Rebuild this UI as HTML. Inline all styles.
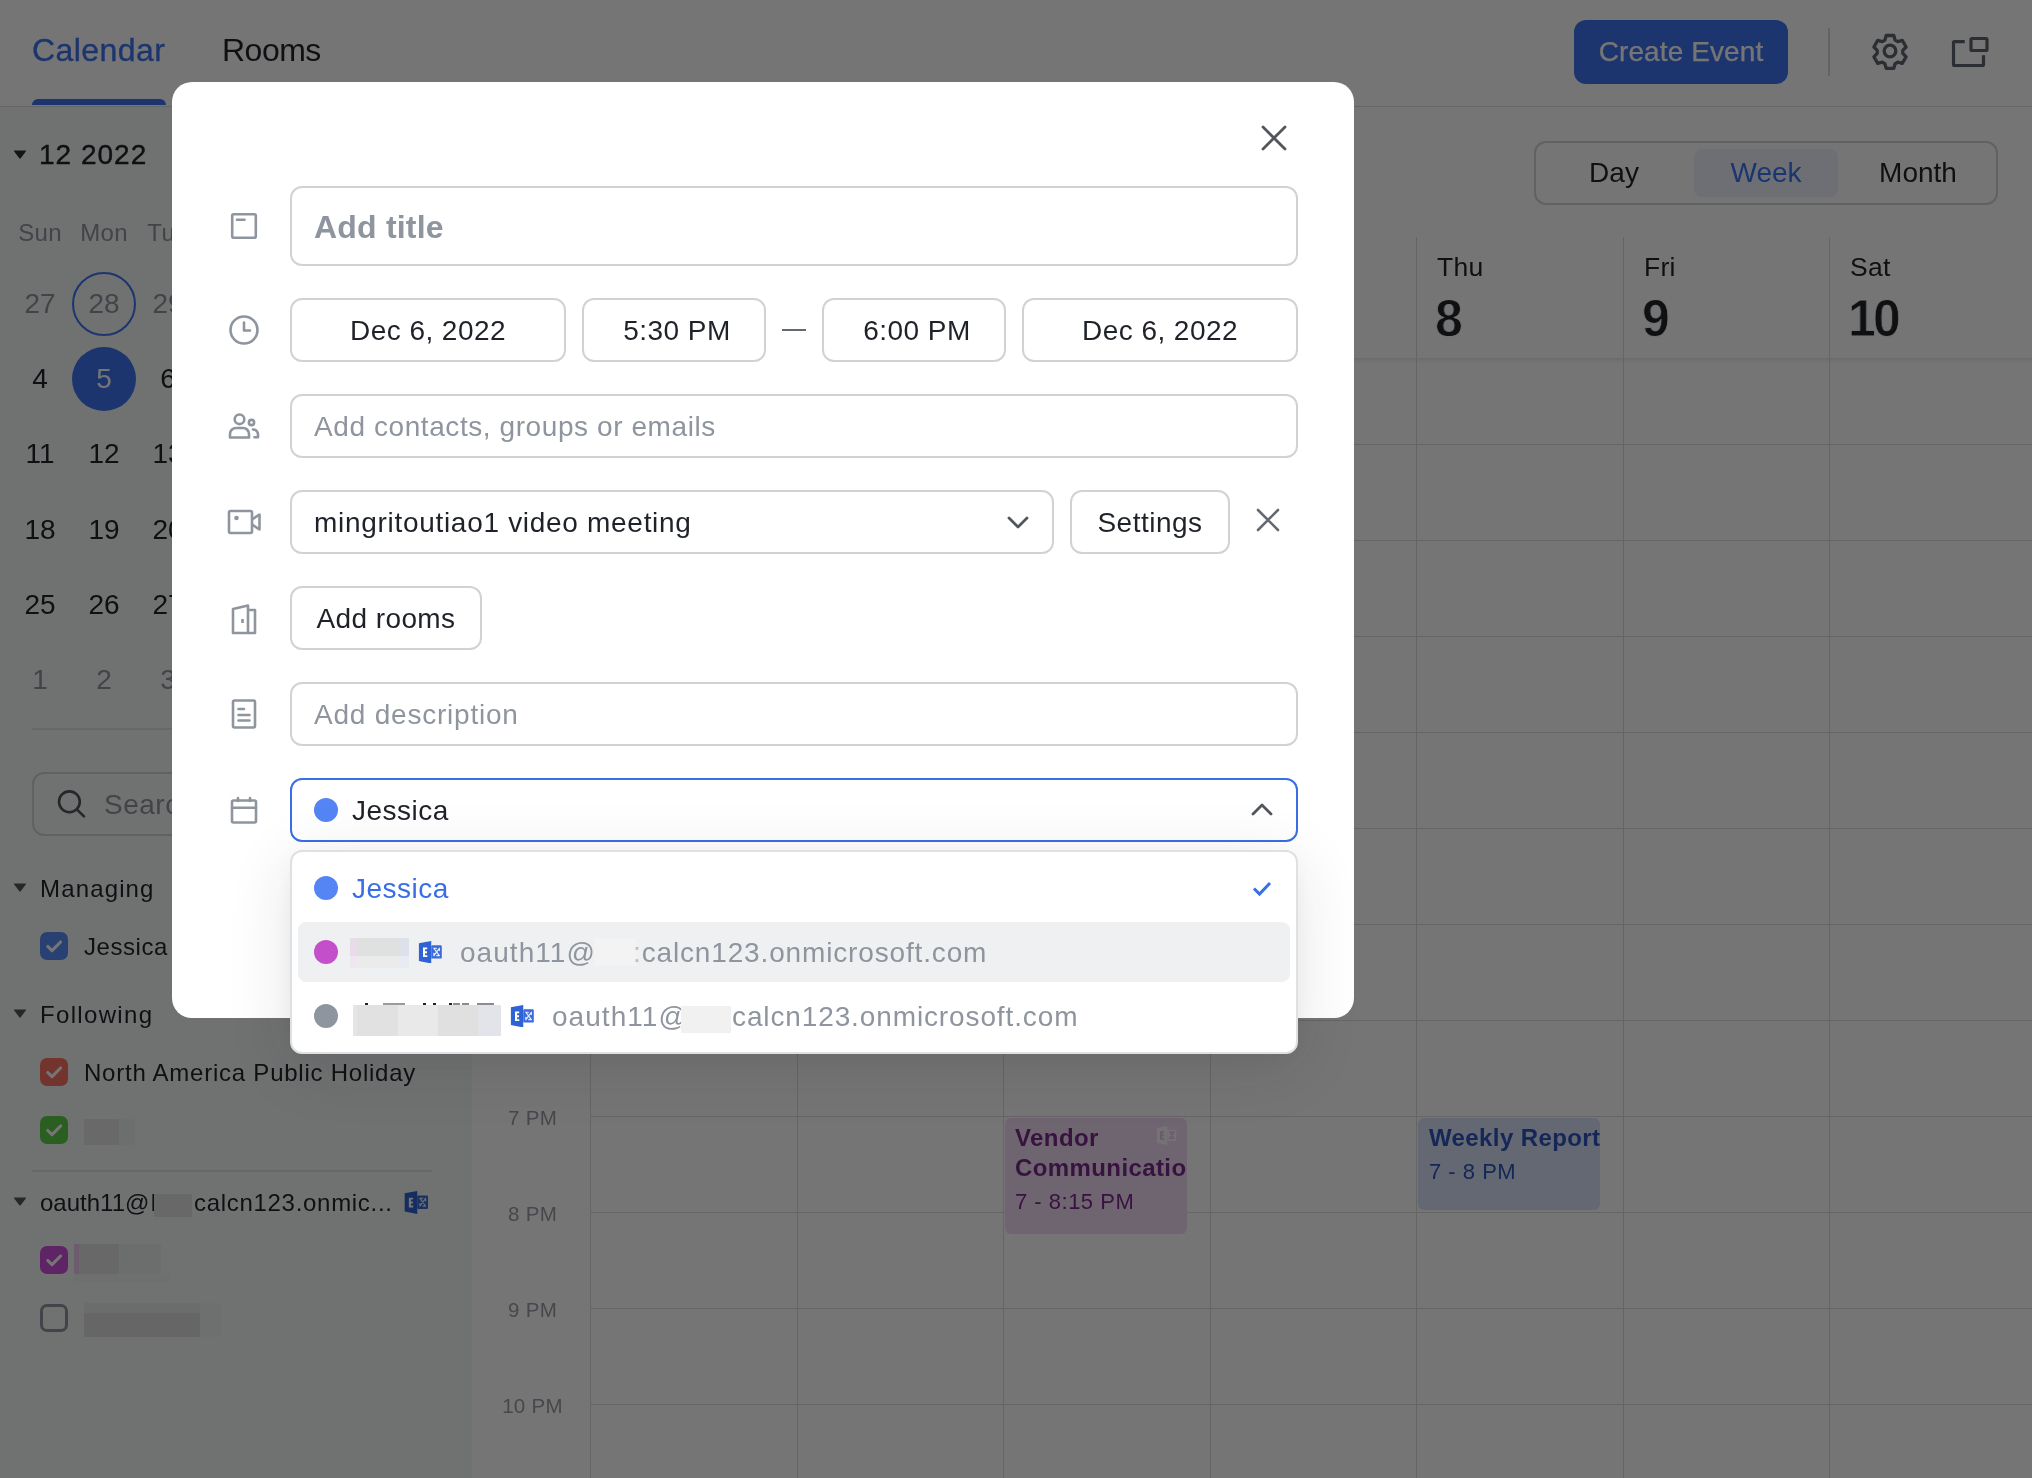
<!DOCTYPE html>
<html>
<head>
<meta charset="utf-8">
<title>Calendar</title>
<style>
*{box-sizing:border-box;margin:0;padding:0}
html,body{width:2032px;height:1478px;overflow:hidden;background:#fff}
body{font-family:"Liberation Sans",sans-serif;color:#1f2329}
#app{position:relative;width:2032px;height:1478px;overflow:hidden;background:#fff}
.t,.it,.mc,.wd,.sl,.sh,.tm,.dn,.dd{will-change:transform}
.abs{position:absolute}
.t{position:absolute;white-space:nowrap;line-height:1}
#topbar{position:absolute;left:0;top:0;width:2032px;height:107px;border-bottom:1px solid #dcdee0;background:#fff}
#tab-ul{position:absolute;left:32px;top:99px;width:134px;height:6px;background:#3f73ef;border-radius:6px 6px 0 0}
#create{position:absolute;left:1574px;top:20px;width:214px;height:64px;border-radius:12px;background:#3f73ef}
#sidebar{position:absolute;left:0;top:107px;width:472px;height:1371px;background:#f4f6f6}
.mc{position:absolute;width:64px;text-align:center;font-size:28px;line-height:34px;color:#1f2329;white-space:nowrap}
.mc.g{color:#8f959e}
.wd{position:absolute;width:64px;text-align:center;font-size:24px;line-height:28px;color:#8f959e;white-space:nowrap;letter-spacing:.3px}
.cb{position:absolute;left:40px;width:28px;height:28px;border-radius:7px}
.sl{position:absolute;left:84px;font-size:24px;line-height:30px;white-space:nowrap;color:#1f2329;letter-spacing:.3px}
.sh{position:absolute;left:40px;font-size:24px;line-height:30px;white-space:nowrap;color:#1f2329;letter-spacing:.6px}
.b{position:absolute}
#main{position:absolute;left:472px;top:107px;width:1560px;height:1371px;background:#fff}
.vl{position:absolute;top:237px;width:1px;height:1241px;background:#dcdddf}
.hl{position:absolute;left:590px;width:1442px;height:1px;background:#dcdddf}
.tm{position:absolute;left:473px;width:119px;text-align:center;font-size:20.5px;line-height:26px;color:#989ea7;white-space:nowrap;letter-spacing:.3px}
.dn{position:absolute;letter-spacing:.3px;font-size:26.5px;line-height:30px;color:#1f2329;white-space:nowrap}
.dd{position:absolute;font-size:52px;line-height:52px;font-weight:bold;color:#1f2329;white-space:nowrap;transform:scaleX(.96);transform-origin:0 50%;-webkit-text-stroke:.8px #fff;letter-spacing:-3px}
#mask{position:absolute;left:0;top:0;width:2032px;height:1478px;background:rgba(0,0,0,.54)}
#modal{position:absolute;left:172px;top:82px;width:1182px;height:936px;border-radius:20px;background:#fff}
.inp{position:absolute;border:2px solid #d0d3d6;border-radius:12px;background:#fff}
.it{position:absolute;white-space:nowrap;font-size:28px;line-height:34px;color:#1f2329}
.ph{color:#8f959e}
.ico{position:absolute}
#dropdown{position:absolute;left:290px;top:850px;width:1008px;height:204px;border-radius:12px;background:#fff;border:2px solid #dee0e3;box-shadow:0 12px 64px rgba(31,35,41,.12),0 6px 24px rgba(31,35,41,.04)}
</style>
</head>
<body>
<div id="app">
<svg width="0" height="0" style="position:absolute"><defs>
<symbol id="exch" viewBox="0 0 24 23">
<path d="M0.3 2.3 L13 0 V23 L0.3 20.5 Z" fill="#2f62d3"/>
<path d="M4.6 6.7 H8.9 V8.5 H6.7 V10.6 H8.7 V12.4 H6.7 V14.6 H9 V16.4 H4.6 Z" fill="#fff"/>
<rect x="13" y="4.4" width="10.8" height="13.6" rx="1.2" fill="#3a6bd8"/>
<path d="M15.7 7.4 L21.3 15 M21.3 7.4 L15.7 15 M15.7 7.4 h2.6 M21.3 15 h-2.6 M21.3 7.4 v2.4 M15.7 15 v-2.4" fill="none" stroke="#e6edff" stroke-width="1.25" stroke-linecap="round"/>
</symbol>
<symbol id="tri" viewBox="0 0 14 9"><path d="M1.6 0.6 H12.4 Q13.6 0.6 12.8 1.6 L7.7 8.2 Q7 9 6.3 8.2 L1.2 1.6 Q0.4 0.6 1.6 0.6 Z"/></symbol>
</defs></svg>
<div id="topbar">
<div class="t" style="left:32px;top:31.5px;font-size:32px;line-height:36px;color:#3f73ef;letter-spacing:.45px;-webkit-text-stroke:.35px #3f73ef">Calendar</div>
<div class="t" style="left:222px;top:31.5px;font-size:32px;line-height:36px;color:#1f2329;letter-spacing:-.5px">Rooms</div>
<div id="tab-ul"></div>
<div id="create"><div class="t" style="left:0;width:214px;text-align:center;top:15px;font-size:28px;line-height:34px;color:#fff;letter-spacing:.1px;-webkit-text-stroke:.25px #fff">Create Event</div></div>
<div class="abs" style="left:1828px;top:28px;width:2px;height:48px;background:#d5d7da"></div>
<svg class="abs" style="left:1870px;top:31px" width="40" height="40" viewBox="0 0 40 40"><g fill="none" stroke="#5f656e" stroke-width="3.3" stroke-linejoin="round">
<path d="M16.2 4.5 h7.6 l1.3 4.6 l2.6 1.5 l4.6 -1.2 l3.8 6.6 l-3.3 3.4 v3 l3.3 3.4 l-3.8 6.6 l-4.6 -1.2 l-2.6 1.5 l-1.3 4.6 h-7.6 l-1.3 -4.6 l-2.6 -1.5 l-4.6 1.2 l-3.8 -6.6 l3.3 -3.4 v-3 l-3.3 -3.4 l3.8 -6.6 l4.6 1.2 l2.6 -1.5 z"/>
<circle cx="20" cy="20" r="5.8"/></g></svg>
<svg class="abs" style="left:1950px;top:35px" width="40" height="34" viewBox="0 0 40 34"><g fill="none" stroke="#5f656e" stroke-width="3.2" stroke-linejoin="round" stroke-linecap="butt">
<path d="M14.8 6.6 H4.5 a1 1 0 0 0 -1 1 V29.5 a1 1 0 0 0 1 1 H32.5 a1 1 0 0 0 1 -1 V20.3"/>
<rect x="21" y="3.5" width="16" height="12" rx="1"/></g></svg>
</div>
<div id="sidebar"></div>
<svg class="abs" style="left:13px;top:150px" width="14" height="9" viewBox="0 0 14 9" fill="#2b2f36"><use href="#tri"/></svg>
<div class="t" style="left:39px;top:137.5px;font-size:28px;line-height:34px;color:#1f2329;letter-spacing:1px;-webkit-text-stroke:.4px #1f2329">12 2022</div>
<div class="wd" style="left:8px;top:219px">Sun</div>
<div class="wd" style="left:72px;top:219px">Mon</div>
<div class="wd" style="left:136px;top:219px">Tue</div>
<div class="abs" style="left:72px;top:272px;width:64px;height:64px;border-radius:50%;border:2px solid #3f73ef"></div>
<div class="abs" style="left:72px;top:347px;width:64px;height:64px;border-radius:50%;background:#3f73ef"></div>
<div class="mc g" style="left:8px;top:287px">27</div>
<div class="mc g" style="left:72px;top:287px">28</div>
<div class="mc g" style="left:136px;top:287px">29</div>
<div class="mc" style="left:8px;top:362px">4</div>
<div class="mc" style="left:72px;top:362px;color:#fff">5</div>
<div class="mc" style="left:136px;top:362px">6</div>
<div class="mc" style="left:8px;top:437px">11</div>
<div class="mc" style="left:72px;top:437px">12</div>
<div class="mc" style="left:136px;top:437px">13</div>
<div class="mc" style="left:8px;top:513px">18</div>
<div class="mc" style="left:72px;top:513px">19</div>
<div class="mc" style="left:136px;top:513px">20</div>
<div class="mc" style="left:8px;top:588px">25</div>
<div class="mc" style="left:72px;top:588px">26</div>
<div class="mc" style="left:136px;top:588px">27</div>
<div class="mc g" style="left:8px;top:663px">1</div>
<div class="mc g" style="left:72px;top:663px">2</div>
<div class="mc g" style="left:136px;top:663px">3</div>
<div class="abs" style="left:32px;top:728px;width:400px;height:2px;background:#e0e2e5"></div>
<div class="abs" style="left:32px;top:772px;width:400px;height:64px;border:2px solid #d0d3d6;border-radius:12px;background:#f4f6f6"></div>
<svg class="abs" style="left:54px;top:786px" width="36" height="36" viewBox="0 0 36 36"><circle cx="15.4" cy="15.8" r="10.4" fill="none" stroke="#51565d" stroke-width="2.6"/><path d="M23 23.6 L30 30.4" stroke="#51565d" stroke-width="2.6" stroke-linecap="round"/></svg>
<div class="t" style="left:104px;top:787.5px;font-size:28px;line-height:34px;color:#8f959e;letter-spacing:.5px">Search</div>
<svg class="abs" style="left:13px;top:883px" width="14" height="9" viewBox="0 0 14 9" fill="#51565d"><use href="#tri"/></svg>
<div class="sh" style="top:873.6px;letter-spacing:1.15px">Managing</div>
<div class="cb" style="top:932px;background:#5b8ef8"><svg width="28" height="28" viewBox="0 0 28 28" style="display:block"><path d="M7.8 14.5 L12 18.7 L20.6 10" fill="none" stroke="#fff" stroke-width="3.1" stroke-linecap="round" stroke-linejoin="round"/></svg></div>
<div class="sl" style="top:931.8px;letter-spacing:.55px">Jessica</div>
<svg class="abs" style="left:13px;top:1009px" width="14" height="9" viewBox="0 0 14 9" fill="#51565d"><use href="#tri"/></svg>
<div class="sh" style="top:999.6px;letter-spacing:1.33px">Following</div>
<div class="cb" style="top:1058px;background:#fb7165"><svg width="28" height="28" viewBox="0 0 28 28" style="display:block"><path d="M7.8 14.5 L12 18.7 L20.6 10" fill="none" stroke="#fff" stroke-width="3.1" stroke-linecap="round" stroke-linejoin="round"/></svg></div>
<div class="sl" style="top:1057.6px;letter-spacing:.76px">North America Public Holiday</div>
<div class="cb" style="top:1116px;background:#5fcf4a"><svg width="28" height="28" viewBox="0 0 28 28" style="display:block"><path d="M7.8 14.5 L12 18.7 L20.6 10" fill="none" stroke="#fff" stroke-width="3.1" stroke-linecap="round" stroke-linejoin="round"/></svg></div>
<div class="b" style="left:84px;top:1119px;width:35px;height:26px;background:#e4e5e5"></div><div class="b" style="left:119px;top:1119px;width:16px;height:26px;background:#eeefef"></div>
<div class="abs" style="left:32px;top:1170px;width:400px;height:2px;background:#dfe1e6"></div>
<svg class="abs" style="left:13px;top:1197px" width="14" height="9" viewBox="0 0 14 9" fill="#51565d"><use href="#tri"/></svg>
<div class="sh" style="top:1187.6px;letter-spacing:0px">oauth11@<span style="margin-left:1.5px">l</span></div>
<div class="b" style="left:154px;top:1194px;width:38px;height:23px;background:#e2e3e3"></div>
<div class="sh" style="left:193.5px;top:1187.6px;letter-spacing:.7px">calcn123.onmic...</div>
<svg class="abs" style="left:404px;top:1190.5px" width="24.5" height="23" viewBox="0 0 24 23"><use href="#exch"/></svg>
<div class="cb" style="top:1246px;background:#cc50dc"><svg width="28" height="28" viewBox="0 0 28 28" style="display:block"><path d="M7.8 14.5 L12 18.7 L20.6 10" fill="none" stroke="#fff" stroke-width="3.1" stroke-linecap="round" stroke-linejoin="round"/></svg></div>
<div class="b" style="left:74px;top:1244px;width:5px;height:30px;background:#ecc9ef"></div><div class="b" style="left:79px;top:1244px;width:40px;height:30px;background:#e2e3e3"></div><div class="b" style="left:119px;top:1244px;width:42px;height:30px;background:#ecedee"></div><div class="b" style="left:74px;top:1274px;width:96px;height:8px;background:#f0f1f1"></div>
<div class="cb" style="top:1304px;border:3px solid #8f959e;background:transparent"></div>
<div class="b" style="left:84px;top:1303px;width:116px;height:10px;background:#eaebeb"></div><div class="b" style="left:84px;top:1313px;width:116px;height:24px;background:#dedfdf"></div><div class="b" style="left:200px;top:1303px;width:21px;height:34px;background:#f0f1f1"></div>
<div id="main"></div>
<div class="abs" style="left:1534px;top:141px;width:464px;height:64px;border:2px solid #d0d3d6;border-radius:12px"></div>
<div class="abs" style="left:1694px;top:149px;width:144px;height:48px;border-radius:8px;background:#eff2fd"></div>
<div class="t" style="left:1544px;width:140px;text-align:center;top:156px;font-size:28px;line-height:34px;color:#1f2329">Day</div>
<div class="t" style="left:1694px;width:144px;text-align:center;top:156px;font-size:28px;line-height:34px;color:#3f73ef">Week</div>
<div class="t" style="left:1848px;width:140px;text-align:center;top:156px;font-size:28px;line-height:34px;color:#1f2329">Month</div>
<div class="abs" style="left:472px;top:358px;width:1560px;height:6px;background:linear-gradient(180deg,rgba(31,35,41,.10),rgba(31,35,41,.04) 50%,rgba(31,35,41,0))"></div>
<div class="vl" style="left:590px"></div>
<div class="vl" style="left:797px"></div>
<div class="vl" style="left:1003px"></div>
<div class="vl" style="left:1210px"></div>
<div class="vl" style="left:1416px"></div>
<div class="vl" style="left:1623px"></div>
<div class="vl" style="left:1829px"></div>
<div class="hl" style="top:444px"></div>
<div class="hl" style="top:540px"></div>
<div class="hl" style="top:636px"></div>
<div class="hl" style="top:732px"></div>
<div class="hl" style="top:828px"></div>
<div class="hl" style="top:924px"></div>
<div class="hl" style="top:1020px"></div>
<div class="hl" style="top:1116px"></div>
<div class="hl" style="top:1212px"></div>
<div class="hl" style="top:1308px"></div>
<div class="hl" style="top:1404px"></div>
<div class="tm" style="top:1105px">7 PM</div>
<div class="tm" style="top:1201px">8 PM</div>
<div class="tm" style="top:1297px">9 PM</div>
<div class="tm" style="top:1393px">10 PM</div>
<div class="dn" style="left:611px;top:252px">Sun</div>
<div class="dd" style="left:609px;top:292px">4</div>
<div class="dn" style="left:818px;top:252px">Mon</div>
<div class="dd" style="left:816px;top:292px">5</div>
<div class="dn" style="left:1024px;top:252px">Tue</div>
<div class="dd" style="left:1022px;top:292px">6</div>
<div class="dn" style="left:1231px;top:252px">Wed</div>
<div class="dd" style="left:1229px;top:292px">7</div>
<div class="dn" style="left:1437px;top:252px">Thu</div>
<div class="dd" style="left:1435px;top:292px">8</div>
<div class="dn" style="left:1644px;top:252px">Fri</div>
<div class="dd" style="left:1642px;top:292px">9</div>
<div class="dn" style="left:1850px;top:252px">Sat</div>
<div class="dd" style="left:1848px;top:292px">10</div>
<div class="abs" style="left:1005px;top:1118px;width:182px;height:116px;border-radius:6px;background:#f2dcf4;overflow:hidden"><div class="t" style="left:10px;top:5px;font-size:24px;line-height:30px;font-weight:bold;color:#7c2a8c;letter-spacing:.4px">Vendor<br>Communicatio</div><div class="t" style="left:10px;top:70px;font-size:22px;line-height:28px;color:#7c2a8c;letter-spacing:.5px">7 - 8:15 PM</div><svg class="abs" style="left:151px;top:8px;opacity:.8" width="21" height="19" viewBox="0 0 24 23"><path d="M0.3 2.3 L13 0 V23 L0.3 20.5 Z" fill="#fff"/><rect x="13" y="4.6" width="10.8" height="13.2" rx="1" fill="#fff"/><path d="M4.2 6.4 H9.2 V8.6 H6.6 V10.4 H9 V12.5 H6.6 V14.4 H9.3 V16.6 H4.2 Z" fill="#e3bfe8"/><path d="M15.6 7.4 H21.4 L15.6 15 H21.4 M15.6 7.4 L21.4 15" fill="none" stroke="#e3bfe8" stroke-width="1.3"/></svg></div>
<div class="abs" style="left:1418px;top:1118px;width:182px;height:92px;border-radius:6px;background:#d9e3fb;overflow:hidden"><div class="t" style="left:11px;top:5px;font-size:24px;line-height:30px;font-weight:bold;color:#2c55bd;letter-spacing:.4px">Weekly Report</div><div class="t" style="left:11px;top:40px;font-size:22px;line-height:28px;color:#2c55bd;letter-spacing:.5px">7 - 8 PM</div></div>
<div id="mask"></div>
<div id="modal"></div>
<svg class="abs" style="left:1258px;top:122px" width="32" height="32" viewBox="0 0 32 32"><path d="M5 5 L27 27 M27 5 L5 27" stroke="#51565d" stroke-width="2.8" stroke-linecap="round"/></svg>
<div class="inp" style="left:290px;top:186px;width:1008px;height:80px"></div>
<div class="it ph" style="left:314px;top:208px;font-size:32px;line-height:38px;font-weight:bold;letter-spacing:.2px">Add title</div>
<svg class="ico" style="left:228px;top:210px" width="32" height="32" viewBox="0 0 32 32"><rect x="4.2" y="4.2" width="23.6" height="23.6" rx="1.5" fill="none" stroke="#8f959e" stroke-width="2.6"/><path d="M9 9.8 H16.5" stroke="#8f959e" stroke-width="2.6" stroke-linecap="round"/></svg>
<div class="inp" style="left:290px;top:298px;width:276px;height:64px"></div>
<div class="it" style="left:290px;width:276px;text-align:center;top:314px;letter-spacing:.45px">Dec 6, 2022</div>
<div class="inp" style="left:582px;top:298px;width:184px;height:64px"></div>
<div class="it" style="left:585px;width:184px;text-align:center;top:314px;letter-spacing:.45px">5:30 PM</div>
<div class="inp" style="left:822px;top:298px;width:184px;height:64px"></div>
<div class="it" style="left:825px;width:184px;text-align:center;top:314px;letter-spacing:.45px">6:00 PM</div>
<div class="inp" style="left:1022px;top:298px;width:276px;height:64px"></div>
<div class="it" style="left:1022px;width:276px;text-align:center;top:314px;letter-spacing:.45px">Dec 6, 2022</div>
<div class="abs" style="left:782px;top:329px;width:24px;height:2px;background:#646a73"></div>
<svg class="ico" style="left:226px;top:312px" width="36" height="36" viewBox="0 0 36 36"><circle cx="18" cy="18" r="13.5" fill="none" stroke="#8f959e" stroke-width="2.6"/><path d="M18 10.5 V18.5 H24" fill="none" stroke="#8f959e" stroke-width="2.6" stroke-linecap="round" stroke-linejoin="round"/></svg>
<div class="inp" style="left:290px;top:394px;width:1008px;height:64px"></div>
<div class="it ph" style="left:314px;top:410px;letter-spacing:.58px">Add contacts, groups or emails</div>
<svg class="ico" style="left:226px;top:408px" width="36" height="36" viewBox="0 0 36 36"><g fill="none" stroke="#8f959e" stroke-width="2.6" stroke-linecap="round" stroke-linejoin="round"><circle cx="13.5" cy="11.3" r="4.8"/><path d="M4 29.5 v-3.5 a6 6 0 0 1 6 -6 h7 a6 6 0 0 1 6 6 v3.5 z"/><circle cx="25.5" cy="14.5" r="2.6"/><path d="M27 21.5 a5 5 0 0 1 5 5 v2.8 h-3.5"/></g></svg>
<div class="inp" style="left:290px;top:490px;width:764px;height:64px"></div>
<div class="it" style="left:314px;top:506px;letter-spacing:.7px">mingritoutiao1 video meeting</div>
<svg class="abs" style="left:1004px;top:510px" width="28" height="24" viewBox="0 0 28 24"><path d="M5 8 L14 17 L23 8" fill="none" stroke="#51565d" stroke-width="2.8" stroke-linecap="round" stroke-linejoin="round"/></svg>
<div class="inp" style="left:1070px;top:490px;width:160px;height:64px"></div>
<div class="it" style="left:1070px;width:160px;text-align:center;top:506px;letter-spacing:.5px">Settings</div>
<svg class="abs" style="left:1254px;top:506px" width="28" height="28" viewBox="0 0 28 28"><path d="M4 4 L24 24 M24 4 L4 24" stroke="#646a73" stroke-width="2.6" stroke-linecap="round"/></svg>
<svg class="ico" style="left:226px;top:504px" width="38" height="36" viewBox="0 0 38 36"><g fill="none" stroke="#8f959e" stroke-width="2.6" stroke-linejoin="round"><rect x="3" y="7" width="23" height="22" rx="1.5"/><path d="M26 15.5 L33.5 10.5 V25.5 L26 20.5"/></g><circle cx="10.5" cy="14" r="2.3" fill="#8f959e"/></svg>
<div class="inp" style="left:290px;top:586px;width:192px;height:64px"></div>
<div class="it" style="left:290px;width:192px;text-align:center;top:602px;letter-spacing:.4px">Add rooms</div>
<svg class="ico" style="left:226px;top:600px" width="36" height="36" viewBox="0 0 36 36"><g fill="none" stroke="#8f959e" stroke-width="2.6" stroke-linejoin="round"><path d="M7 9 L22 5.5 V33 H7 Z"/><path d="M22 10 H29 V33 H22"/></g><path d="M16.5 19 v4" stroke="#8f959e" stroke-width="2.6"/></svg>
<div class="inp" style="left:290px;top:682px;width:1008px;height:64px"></div>
<div class="it ph" style="left:314px;top:698px;letter-spacing:.78px">Add description</div>
<svg class="ico" style="left:226px;top:696px" width="36" height="36" viewBox="0 0 36 36"><g fill="none" stroke="#8f959e" stroke-width="2.6" stroke-linejoin="round" stroke-linecap="round"><rect x="7" y="4.5" width="22" height="27" rx="1.5"/><path d="M12.5 13 H18 M12.5 19 H23.5 M12.5 24.5 H23.5"/></g></svg>
<div class="inp" style="left:290px;top:778px;width:1008px;height:64px;border-color:#3a6ee6"></div>
<div class="abs" style="left:314px;top:798px;width:24px;height:24px;border-radius:50%;background:#5585f5"></div>
<div class="it" style="left:352px;top:794px;letter-spacing:.5px">Jessica</div>
<svg class="abs" style="left:1248px;top:798px" width="28" height="24" viewBox="0 0 28 24"><path d="M5 16 L14 7 L23 16" fill="none" stroke="#51565d" stroke-width="2.8" stroke-linecap="round" stroke-linejoin="round"/></svg>
<svg class="ico" style="left:226px;top:792px" width="36" height="36" viewBox="0 0 36 36"><g fill="none" stroke="#8f959e" stroke-width="2.6" stroke-linejoin="round" stroke-linecap="round"><rect x="6" y="8.5" width="24" height="22" rx="1.5"/><path d="M6 15.8 H30 M12 6 V9 M24 6 V9"/></g></svg>
<div id="dropdown"></div>
<div class="abs" style="left:314px;top:876px;width:24px;height:24px;border-radius:50%;background:#5585f5"></div>
<div class="it" style="left:352px;top:872px;color:#3a6ee6;letter-spacing:.5px">Jessica</div>
<svg class="abs" style="left:1248px;top:876px" width="28" height="24" viewBox="0 0 28 24"><path d="M6 12.5 L11.5 18 L22 7" fill="none" stroke="#3a6ee6" stroke-width="3"/></svg>
<div class="abs" style="left:298px;top:922px;width:992px;height:60px;border-radius:8px;background:#eff0f1"></div>
<div class="abs" style="left:314px;top:940px;width:24px;height:24px;border-radius:50%;background:#c44fcb"></div>
<div class="b" style="left:350px;top:938px;width:59px;height:18px;background:linear-gradient(90deg,#e8dce9 0,#e8dce9 12%,#dfe0e0 12%,#dfe0e0 85%,#dde1ea 85%)"></div>
<div class="b" style="left:350px;top:956px;width:59px;height:12px;background:linear-gradient(90deg,#efe6f0 0,#efe6f0 12%,#ebebec 12%,#ebebec 85%,#e8ebf2 85%)"></div>
<svg class="abs" style="left:417.5px;top:940.5px" width="24.5" height="22.5" viewBox="0 0 24 23"><use href="#exch"/></svg>
<div class="it" style="left:460px;top:936px;color:#8f959e;letter-spacing:1.05px">oauth11@</div>
<div class="b" style="left:594px;top:938px;width:42px;height:28px;background:#f3f3f4"></div>
<div class="it" style="left:632.5px;top:936px;color:#8f959e;letter-spacing:.85px"><span style="opacity:.55">:</span>calcn123.onmicrosoft.com</div>
<div class="abs" style="left:314px;top:1004px;width:24px;height:24px;border-radius:50%;background:#8f959e"></div>
<div class="b" style="left:365px;top:1003px;width:3px;height:2px;background:#1f2329"></div>
<div class="b" style="left:383px;top:1003px;width:22px;height:2px;background:#9a9b9c"></div>
<div class="b" style="left:423px;top:1003px;width:3px;height:2px;background:#1f2329"></div>
<div class="b" style="left:433px;top:1003px;width:3px;height:2px;background:#1f2329"></div>
<div class="b" style="left:449px;top:1003px;width:3px;height:2px;background:#1f2329"></div>
<div class="b" style="left:453px;top:1003px;width:7px;height:2px;background:#8a8c90"></div>
<div class="b" style="left:462px;top:1003px;width:7px;height:2px;background:#8a8c90"></div>
<div class="b" style="left:477px;top:1003px;width:17px;height:2px;background:#8a8c90"></div>
<div class="b" style="left:353px;top:1005px;width:148px;height:31px;background:linear-gradient(90deg,#e5e5e7 0,#e5e5e7 4px,#e1e1e1 4px,#e1e1e1 45px,#e9e9e9 45px,#e9e9e9 85px,#e0e0e0 85px,#e0e0e0 125px,#e3e4e9 125px)"></div>
<svg class="abs" style="left:510px;top:1004.5px" width="24.5" height="22.5" viewBox="0 0 24 23"><use href="#exch"/></svg>
<div class="it" style="left:552px;top:1000px;color:#8f959e;letter-spacing:1.05px">oauth11@</div>
<div class="b" style="left:681px;top:1006px;width:50px;height:27px;background:#f1f1f2"></div>
<div class="it" style="left:732px;top:1000px;color:#8f959e;letter-spacing:.88px">calcn123.onmicrosoft.com</div>
</div>
</body>
</html>
